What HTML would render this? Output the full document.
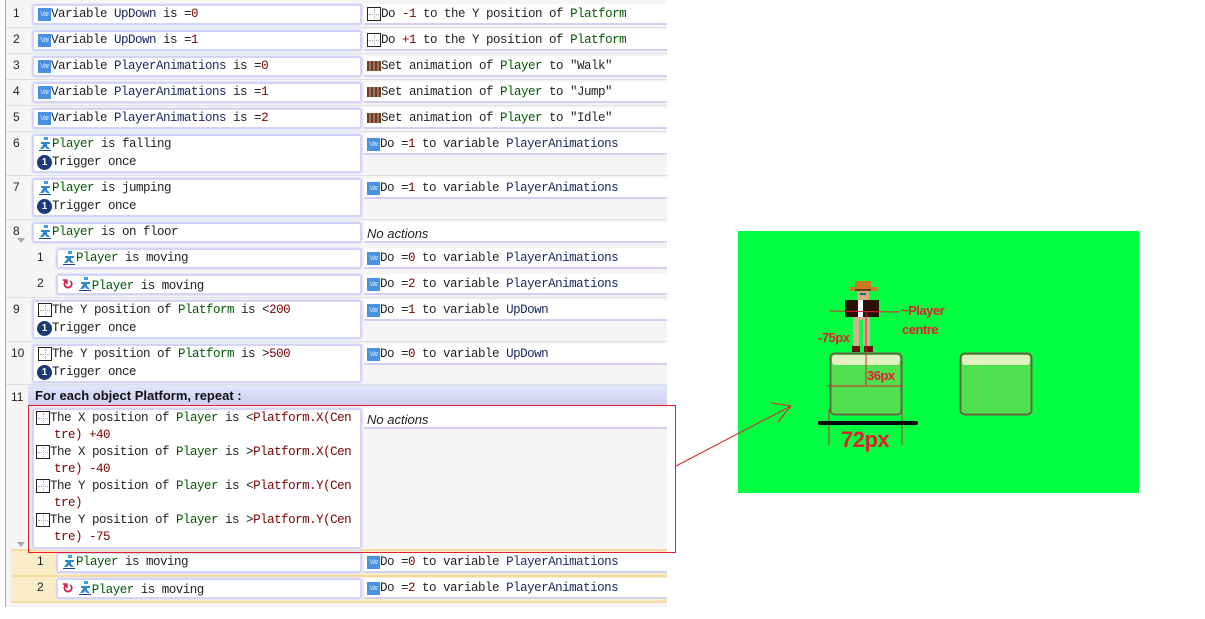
<!DOCTYPE html>
<html><head><meta charset="utf-8"><style>
*{margin:0;padding:0;box-sizing:border-box}
body{width:1205px;height:619px;background:#fff;position:relative;overflow:hidden;font-family:"Liberation Mono",monospace;font-size:12.5px;letter-spacing:-0.5px;color:#222}
.pan{position:absolute;left:5px;top:0;width:662px;height:607px;background:#f5f5f5;border-left:1px solid #aaa}
.sep{position:absolute;left:6px;width:661px;height:1px;background:#dedee8}
.n{position:absolute;font-family:"Liberation Sans",sans-serif;font-size:12px;letter-spacing:0;color:#222}
.c{position:absolute;background:#fff;border:2px solid #d4d4f6;border-radius:3px;outline:1px solid #e4e4fa}
.a{position:absolute;left:364px;width:303px;height:21px;background:#fff;border-bottom:2px solid #d0d0f2}
.l{position:absolute;white-space:nowrap;line-height:17px;height:17px}
.g{color:#005a00}.r{color:#7a0000}.b{color:#1a2a60}
.vi{display:inline-block;width:13px;height:13px;background:#4a90e0;color:#cfe4ff;font-size:7px;line-height:13px;text-align:center;vertical-align:top;margin-top:2px;font-family:"Liberation Sans",sans-serif;letter-spacing:-.5px}
.pi{display:inline-block;width:14px;height:14px;vertical-align:top;margin-top:1px}
.po{display:inline-block;width:14px;height:14px;border:1px solid #222;background:#fff;vertical-align:top;margin-top:1px;position:relative}
.po:before{content:"";position:absolute;left:6px;top:1px;height:10px;border-left:1px dotted #aaa}
.po:after{content:"";position:absolute;top:6px;left:1px;width:10px;border-top:1px dotted #aaa}
.an{display:inline-block;width:14px;height:10px;background:repeating-linear-gradient(90deg,#6b3e28 0 2px,#a0705a 2px 4px);vertical-align:top;margin-top:3px}
.t1{display:inline-block;width:15px;height:15px;border-radius:50%;background:#1c3a78;color:#fff;font-size:10px;line-height:15px;text-align:center;vertical-align:top;margin-top:1px;font-family:"Liberation Sans",sans-serif;font-weight:bold;letter-spacing:0}
.it{font-family:"Liberation Sans",sans-serif;font-style:italic;font-size:13px;letter-spacing:0}
.inv{color:#d0204a;font-weight:bold;font-family:"Liberation Sans",sans-serif;font-size:14px;margin-right:4px;letter-spacing:0}
</style></head><body>
<svg width="0" height="0" style="position:absolute"><defs><symbol id="p" viewBox="0 0 14 14"><rect x="6" y="0" width="4" height="3" fill="#3aa0e0"/><path d="M3 5h9v2H9v2l3 3H9L7 10 5 12H2l3-4V7H3z" fill="#2a88d0"/><rect x="1" y="13" width="12" height="1" fill="#1a4090"/></symbol></defs></svg>
<div class="pan"></div>
<div class="sep" style="top:27px"></div><div class="sep" style="top:53px"></div><div class="sep" style="top:79px"></div><div class="sep" style="top:105px"></div><div class="sep" style="top:131px"></div><div class="sep" style="top:175px"></div><div class="sep" style="top:219px"></div><div class="sep" style="top:297px"></div><div class="sep" style="top:341px"></div><div class="sep" style="top:384px"></div>
<div style="position:absolute;left:28px;top:385px;width:639px;height:20px;background:linear-gradient(#e4e4fa,#d0d0f2)"></div>
<div style="position:absolute;left:11px;top:549px;width:656px;height:54px;background:#fbecc8;border-top:2px solid #f4dca0"></div>
<div style="position:absolute;left:11px;top:575px;width:656px;height:2px;background:#f4dca0"></div>
<div style="position:absolute;left:11px;top:601px;width:656px;height:2px;background:#f4dca0"></div>

<div class="n" style="left:13px;top:6px">1</div><div class="n" style="left:13px;top:32px">2</div><div class="n" style="left:13px;top:58px">3</div><div class="n" style="left:13px;top:84px">4</div><div class="n" style="left:13px;top:110px">5</div><div class="n" style="left:13px;top:136px">6</div><div class="n" style="left:13px;top:180px">7</div><div class="n" style="left:13px;top:224px">8</div><div class="n" style="left:37px;top:250px">1</div><div class="n" style="left:37px;top:276px">2</div><div class="n" style="left:13px;top:302px">9</div><div class="n" style="left:11px;top:346px">10</div><div class="n" style="left:11px;top:390px">11</div><div class="n" style="left:37px;top:554px">1</div><div class="n" style="left:37px;top:580px">2</div>
<div style="position:absolute;left:17px;top:238px;border:4px solid transparent;border-top:5px solid #aaa"></div>
<div style="position:absolute;left:17px;top:542px;border:4px solid transparent;border-top:5px solid #aaa"></div>

<div class="c" style="left:32px;top:4px;width:330px;height:21px"></div><div class="l" style="left:38px;top:6px"><span class="vi">Var</span>Variable <span class="b">UpDown</span> is =<span class="r">0</span></div>
<div class="c" style="left:32px;top:30px;width:330px;height:21px"></div><div class="l" style="left:38px;top:32px"><span class="vi">Var</span>Variable <span class="b">UpDown</span> is =<span class="r">1</span></div>
<div class="c" style="left:32px;top:56px;width:330px;height:21px"></div><div class="l" style="left:38px;top:58px"><span class="vi">Var</span>Variable <span class="b">PlayerAnimations</span> is =<span class="r">0</span></div>
<div class="c" style="left:32px;top:82px;width:330px;height:21px"></div><div class="l" style="left:38px;top:84px"><span class="vi">Var</span>Variable <span class="b">PlayerAnimations</span> is =<span class="r">1</span></div>
<div class="c" style="left:32px;top:108px;width:330px;height:21px"></div><div class="l" style="left:38px;top:110px"><span class="vi">Var</span>Variable <span class="b">PlayerAnimations</span> is =<span class="r">2</span></div>
<div class="c" style="left:32px;top:134px;width:330px;height:39px"></div><div class="l" style="left:38px;top:136px"><svg class="pi"><use href="#p"/></svg><span class="g">Player</span> is falling</div><div class="l" style="left:37px;top:154px"><span class="t1">1</span>Trigger once</div>
<div class="c" style="left:32px;top:178px;width:330px;height:39px"></div><div class="l" style="left:38px;top:180px"><svg class="pi"><use href="#p"/></svg><span class="g">Player</span> is jumping</div><div class="l" style="left:37px;top:198px"><span class="t1">1</span>Trigger once</div>
<div class="c" style="left:32px;top:222px;width:330px;height:21px"></div><div class="l" style="left:38px;top:224px"><svg class="pi"><use href="#p"/></svg><span class="g">Player</span> is on floor</div>
<div class="c" style="left:56px;top:248px;width:306px;height:21px"></div><div class="l" style="left:62px;top:250px"><svg class="pi"><use href="#p"/></svg><span class="g">Player</span> is moving</div>
<div class="c" style="left:56px;top:274px;width:306px;height:21px"></div><div class="l" style="left:62px;top:276px"><span class="inv">↻</span><svg class="pi"><use href="#p"/></svg><span class="g">Player</span> is moving</div>
<div class="c" style="left:32px;top:300px;width:330px;height:39px"></div><div class="l" style="left:38px;top:302px"><span class="po"></span>The Y position of <span class="g">Platform</span> is <<span class="r">200</span></div><div class="l" style="left:37px;top:320px"><span class="t1">1</span>Trigger once</div>
<div class="c" style="left:32px;top:344px;width:330px;height:39px"></div><div class="l" style="left:38px;top:346px"><span class="po"></span>The Y position of <span class="g">Platform</span> is ><span class="r">500</span></div><div class="l" style="left:37px;top:364px"><span class="t1">1</span>Trigger once</div>
<div class="l" style="left:35px;top:387px;font-family:'Liberation Sans',sans-serif;font-weight:bold;font-size:13px;letter-spacing:0;color:#111">For each object Platform, repeat :</div>
<div class="c" style="left:32px;top:408px;width:330px;height:141px"></div>
<div class="l" style="left:36px;top:410px"><span class="po"></span>The X position of <span class="g">Player</span> is <<span class="r">Platform.X(Cen</span></div><div class="l" style="left:54px;top:427px"><span class="r">tre) +40</span></div>
<div class="l" style="left:36px;top:444px"><span class="po"></span>The X position of <span class="g">Player</span> is ><span class="r">Platform.X(Cen</span></div><div class="l" style="left:54px;top:461px"><span class="r">tre) -40</span></div>
<div class="l" style="left:36px;top:478px"><span class="po"></span>The Y position of <span class="g">Player</span> is <<span class="r">Platform.Y(Cen</span></div><div class="l" style="left:54px;top:495px"><span class="r">tre)</span></div>
<div class="l" style="left:36px;top:512px"><span class="po"></span>The Y position of <span class="g">Player</span> is ><span class="r">Platform.Y(Cen</span></div><div class="l" style="left:54px;top:529px"><span class="r">tre) -75</span></div>
<div class="c" style="left:56px;top:552px;width:306px;height:21px"></div><div class="l" style="left:62px;top:554px"><svg class="pi"><use href="#p"/></svg><span class="g">Player</span> is moving</div>
<div class="c" style="left:56px;top:578px;width:306px;height:21px"></div><div class="l" style="left:62px;top:580px"><span class="inv">↻</span><svg class="pi"><use href="#p"/></svg><span class="g">Player</span> is moving</div>

<div class="a" style="top:4px"></div><div class="l" style="left:367px;top:6px"><span class="po"></span>Do <span class="r">-1</span> to the Y position of <span class="g">Platform</span></div>
<div class="a" style="top:30px"></div><div class="l" style="left:367px;top:32px"><span class="po"></span>Do <span class="r">+1</span> to the Y position of <span class="g">Platform</span></div>
<div class="a" style="top:56px"></div><div class="l" style="left:367px;top:58px"><span class="an"></span>Set animation of <span class="g">Player</span> to "Walk"</div>
<div class="a" style="top:82px"></div><div class="l" style="left:367px;top:84px"><span class="an"></span>Set animation of <span class="g">Player</span> to "Jump"</div>
<div class="a" style="top:108px"></div><div class="l" style="left:367px;top:110px"><span class="an"></span>Set animation of <span class="g">Player</span> to "Idle"</div>
<div class="a" style="top:134px"></div><div class="l" style="left:367px;top:136px"><span class="vi">Var</span>Do =<span class="r">1</span> to variable <span class="b">PlayerAnimations</span></div>
<div class="a" style="top:178px"></div><div class="l" style="left:367px;top:180px"><span class="vi">Var</span>Do =<span class="r">1</span> to variable <span class="b">PlayerAnimations</span></div>
<div class="a" style="top:222px"></div><div class="l it" style="left:367px;top:225px">No actions</div>
<div class="a" style="top:248px"></div><div class="l" style="left:367px;top:250px"><span class="vi">Var</span>Do =<span class="r">0</span> to variable <span class="b">PlayerAnimations</span></div>
<div class="a" style="top:274px"></div><div class="l" style="left:367px;top:276px"><span class="vi">Var</span>Do =<span class="r">2</span> to variable <span class="b">PlayerAnimations</span></div>
<div class="a" style="top:300px"></div><div class="l" style="left:367px;top:302px"><span class="vi">Var</span>Do =<span class="r">1</span> to variable <span class="b">UpDown</span></div>
<div class="a" style="top:344px"></div><div class="l" style="left:367px;top:346px"><span class="vi">Var</span>Do =<span class="r">0</span> to variable <span class="b">UpDown</span></div>
<div class="a" style="top:408px"></div><div class="l it" style="left:367px;top:411px">No actions</div>
<div class="a" style="top:552px"></div><div class="l" style="left:367px;top:554px"><span class="vi">Var</span>Do =<span class="r">0</span> to variable <span class="b">PlayerAnimations</span></div>
<div class="a" style="top:578px"></div><div class="l" style="left:367px;top:580px"><span class="vi">Var</span>Do =<span class="r">2</span> to variable <span class="b">PlayerAnimations</span></div>

<div style="position:absolute;left:28px;top:405px;width:648px;height:148px;border:1px solid #e02030"></div>

<div style="position:absolute;left:738px;top:231px;width:401px;height:262px;background:#00ff40"></div>
<svg style="position:absolute;left:0;top:0" width="1205" height="619">
<line x1="676" y1="466" x2="791" y2="406" stroke="#e02030" stroke-width="1"/>
<line x1="791" y1="406" x2="771" y2="403" stroke="#e02030"/><line x1="791" y1="406" x2="778" y2="422" stroke="#e02030"/>
<rect x="830.5" y="353.5" width="71" height="61" rx="4" fill="#4ee04e" stroke="#6a6442" stroke-width="2"/>
<rect x="832" y="355" width="68" height="10" rx="3" fill="#e0f0c0"/>
<rect x="960.5" y="353.5" width="71" height="61" rx="4" fill="#4ee04e" stroke="#6a6442" stroke-width="2"/>
<rect x="962" y="355" width="68" height="10" rx="3" fill="#e0f0c0"/>
<rect x="850" y="287" width="27" height="4" fill="#c87a20"/><rect x="855" y="281" width="16" height="7" fill="#c87a20"/><rect x="855" y="289" width="16" height="2" fill="#6a3a10"/>
<rect x="857" y="291" width="12" height="9" fill="#d8a880"/><rect x="860" y="293" width="6" height="2" fill="#206080"/>
<rect x="845" y="300" width="34" height="17" fill="#2a1008"/><rect x="858" y="300" width="5" height="17" fill="#fff"/>
<rect x="853" y="317" width="17" height="30" fill="#d0b090"/><rect x="859" y="320" width="4" height="27" fill="#00ff40"/>
<rect x="852" y="346" width="8" height="6" fill="#6a1010"/><rect x="864" y="346" width="9" height="6" fill="#6a1010"/>
<g stroke="#e02030" stroke-width="1">
<line x1="830" y1="311" x2="900" y2="312"/><line x1="866" y1="312" x2="866" y2="386"/><line x1="827" y1="386" x2="903" y2="386"/>
<line x1="829" y1="409" x2="829" y2="445"/><line x1="902" y1="409" x2="902" y2="445"/>
</g>
<line x1="820" y1="423" x2="916" y2="423" stroke="#000" stroke-width="4" stroke-linecap="round"/>
<g fill="#e02030" font-family="Liberation Sans" font-weight="bold">
<text x="901" y="315" font-size="13">~Player</text><text x="902" y="334" font-size="13">centre</text>
<text x="818" y="342" font-size="13">-75px</text><text x="867" y="380" font-size="13">36px</text>
<text x="841" y="447" font-size="22">72px</text></g>
</svg>
</body></html>
